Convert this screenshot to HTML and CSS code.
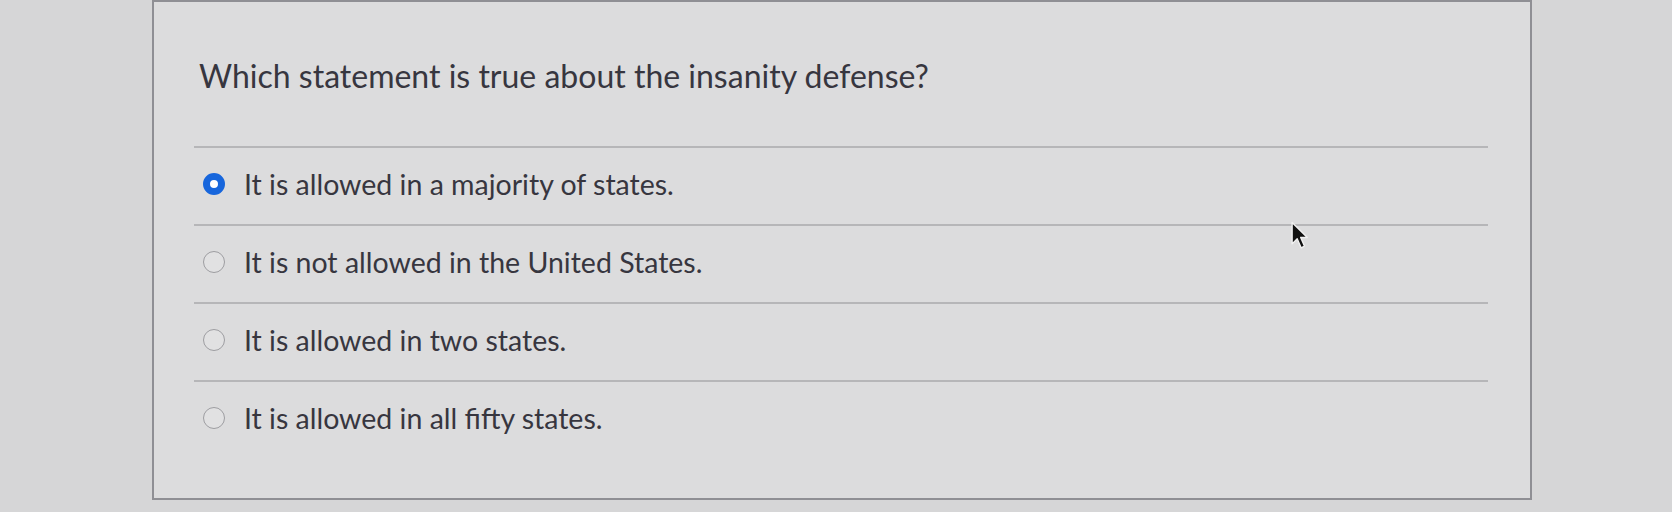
FILE: index.html
```html
<!DOCTYPE html>
<html lang="en">
<head>
  <meta charset="UTF-8" />
  <title>Quiz question</title>
  <link rel="stylesheet" href="styles.css">
</head>
<body>
  <div class="page">
    <div class="card">
      <p class="question">Which statement is true about the insanity defense?</p>
      <div class="options">
        <label class="option">
          <span class="radio checked"></span>
          <span class="option-text">It is allowed in a majority of states.</span>
        </label>
        <label class="option">
          <span class="radio"></span>
          <span class="option-text">It is not allowed in the United States.</span>
        </label>
        <label class="option">
          <span class="radio"></span>
          <span class="option-text">It is allowed in two states.</span>
        </label>
        <label class="option">
          <span class="radio"></span>
          <span class="option-text">It is allowed in all fifty states.</span>
        </label>
      </div>
    </div>
  </div>

  <svg class="cursor" width="18" height="30" viewBox="0 0 16 26">
    <path d="M1 1 L1 20 L5.5 15.5 L9 23.5 L12 22 L8.6 14.3 L14.5 14.3 Z" fill="#111" stroke="#f2f2f2" stroke-width="1.2" stroke-linejoin="round"/>
  </svg>
</body>
</html>
```

FILE: styles.css
```css
body {
  margin: 0;
  background-color: #d6d6d7;
  font-family: Lato, "Open Sans", sans-serif;
  color: #37363f;
}

.page {
  padding: 0 140px 0 152px;
}

.card {
  box-sizing: border-box;
  height: 500px;
  background-color: #dcdcdd;
  border: 2px solid #8f8f94;
  padding: 56px 42px 0 40px;
}

.question {
  margin: 0 0 52px 5px;
  font-size: 32px;
  line-height: 36px;
  font-weight: normal;
}

.option {
  display: flex;
  align-items: center;
  gap: 19px;
  height: 78px;
  box-sizing: border-box;
  border-top: 2px solid #b6b6b8;
  padding: 0 0 4px 9px;
  font-size: 28.5px;
}

.radio {
  box-sizing: border-box;
  width: 22px;
  height: 22px;
  border-radius: 50%;
  border: 1.6px solid #9d9da1;
  background-color: #e1e1e2;
  flex-shrink: 0;
}

.radio.checked {
  border: 7px solid #1766dc;
  background-color: #ffffff;
}

.cursor {
  position: absolute;
  left: 1291px;
  top: 221px;
}
```
